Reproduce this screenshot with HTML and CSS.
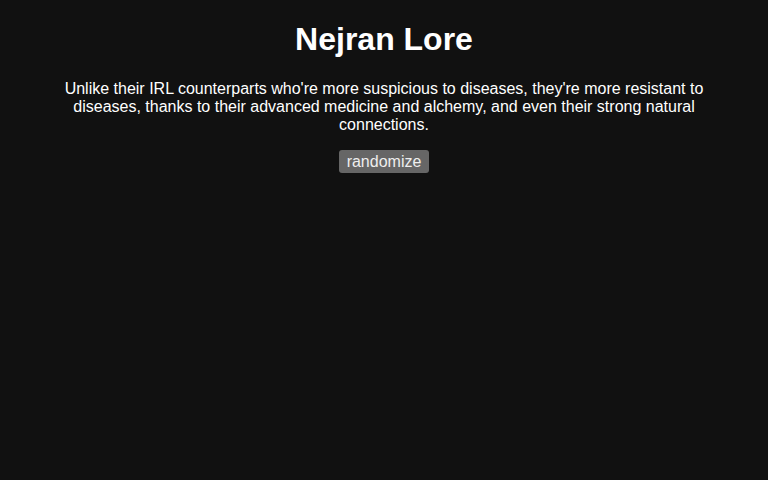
FILE: index.html
```html
<!DOCTYPE html>
<html>
<head>
<meta charset="utf-8">
<meta name="viewport" content="width=device-width, initial-scale=1.0" />
<title>Nejran Lore</title>
<link rel="stylesheet" href="styles.css">
</head>
<body>
<main class="lore">
<h1>Nejran Lore</h1>
<p id="fact">Unlike their IRL counterparts who're more suspicious to diseases, they're more resistant to diseases, thanks to their advanced medicine and alchemy, and even their strong natural connections.</p>
<button type="button" class="randomize">randomize</button>
</main>
</body>
</html>
```

FILE: styles.css
```css
html {
 background: #111;
}
body {
 font-family: 'Liberation Sans', Arial, sans-serif;
 color: #fff;
 margin: 0;
 padding: 0;
}
.lore {
 max-width: 700px;
 margin: 0 auto;
 text-align: center;
}
h1 {
 font-size: 2em;
 margin: 0.67em 0;
}
p {
 margin: 1em 0;
}
.randomize {
 font-family: inherit;
 font-size: 16px;
 color: #eee;
 background-color: #666;
 border: 0;
 border-radius: 3px;
 padding: 3px 8px 2px;
 line-height: 18px;
 cursor: pointer;
}
```
